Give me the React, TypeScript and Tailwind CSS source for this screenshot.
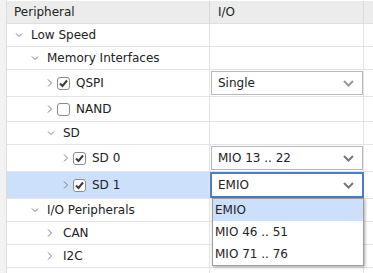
import React from "react";

type Row = {
  level: number;
  label: string;
  open?: boolean;
  check?: boolean;
  select?: string;
  focused?: boolean;
  selected?: boolean;
  height: string;
};

const rows: Row[] = [
  { level: 0, label: "Low Speed", open: true, height: "h-[23px]" },
  { level: 1, label: "Memory Interfaces", open: true, height: "h-[23px]" },
  { level: 2, label: "QSPI", check: true, select: "Single", height: "h-[27px]" },
  { level: 2, label: "NAND", check: false, height: "h-[25px]" },
  { level: 2, label: "SD", open: true, height: "h-[23px]" },
  { level: 3, label: "SD 0", check: true, select: "MIO 13 .. 22", height: "h-[27px]" },
  { level: 3, label: "SD 1", check: true, select: "EMIO", focused: true, selected: true, height: "h-[27px]" },
  { level: 1, label: "I/O Peripherals", open: true, height: "h-[23px]" },
  { level: 2, label: "CAN", height: "h-[23px]" },
  { level: 2, label: "I2C", height: "h-[23px]" },
  // next row is only a few pixels tall in view, its label falls below the edge
  { level: 2, label: "", check: false, height: "h-[23px]" },
];

const indent = ["pl-2", "pl-6", "pl-10", "pl-14"];

function Chevron({ open }: { open?: boolean }) {
  return (
    <svg width="8" height="8" viewBox="0 0 8 8" className="shrink-0">
      {open ? (
        <path d="M1 2.5L4 5.5L7 2.5" fill="none" stroke="#7a7a7a" strokeWidth="1" />
      ) : (
        <path d="M1 0.5L4.5 4L1 7.5" fill="none" stroke="#7a7a7a" strokeWidth="1" />
      )}
    </svg>
  );
}

function Checkbox({ on }: { on: boolean }) {
  return (
    <svg width="13" height="13" viewBox="0 0 13 13" className="ml-[2px] shrink-0">
      <rect x="0.5" y="0.5" width="12" height="12" rx="2.5" fill="#fff" stroke="#8c8c8c" />
      {on && <path d="M3 6.5L5.5 9L10 3.5" fill="none" stroke="#3a3a3a" strokeWidth="2" />}
    </svg>
  );
}

function Select({ value, focused }: { value: string; focused?: boolean }) {
  return (
    <div
      className={`ml-[1px] flex h-[24px] w-[152px] items-center justify-between border bg-white pl-[6px] pr-[8px] ${
        focused ? "border-[#4a7dd1] outline outline-[#4a7dd1]" : "border-[#b9b9b9]"
      }`}
    >
      <span>{value}</span>
      <svg width="11" height="7" viewBox="0 0 11 7">
        <path d="M1 1L5.5 5.5L10 1" fill="none" stroke={value === "Single" ? "#9a9a9a" : "#777"} strokeWidth="2" />
      </svg>
    </div>
  );
}

export default function App() {
  return (
    <div
      className="relative flex h-[273px] w-[373px] overflow-hidden bg-white text-[12px] text-[#222]"
      style={{ fontFamily: '"DejaVu Sans", sans-serif' }}
    >
      <div className="w-[7px] shrink-0 border-r border-[#dedede] bg-[#f2f2f2]" />
      <div className="flex flex-1 flex-col pt-[1px]">
        {/* header */}
        <div className="flex h-[23px] shrink-0 border-b border-[#e0e0e0] bg-[#ececec]">
          <div className="flex w-[203px] shrink-0 items-center border-r border-[#d9d9d9] pl-[7px]">Peripheral</div>
          <div className="flex w-[154px] shrink-0 items-center border-r border-[#dcdcdc] pl-[8px]">I/O</div>
          <div className="flex-1" />
        </div>

        {rows.map((r, i) => (
          <div key={i} className={`flex shrink-0 border-b border-[#e4e4e4] ${r.height}`}>
            <div
              className={`flex w-[203px] shrink-0 items-center border-r border-[#e4e4e4] ${indent[r.level]} ${
                r.selected ? "bg-[#cde0fb]" : ""
              }`}
            >
              <Chevron open={r.open} />
              {r.check !== undefined ? (
                <>
                  <Checkbox on={r.check} />
                  {r.label && <span className="ml-[6px]">{r.label}</span>}
                </>
              ) : (
                <span className="ml-[8px]">{r.label}</span>
              )}
            </div>
            <div className="flex w-[154px] shrink-0 items-center border-r border-[#e4e4e4]">
              {r.select && <Select value={r.select} focused={r.focused} />}
            </div>
            <div className="flex-1" />
          </div>
        ))}
      </div>

      {/* open dropdown list */}
      <div className="absolute left-[212px] top-[198px] flex w-[152px] flex-col border border-[#9e9e9e] bg-white shadow-[1px_1px_3px_rgba(0,0,0,0.35)]">
        <div className="flex h-[22px] items-center bg-[#cde0fb] pl-[2px]">EMIO</div>
        <div className="flex h-[22px] items-center pl-[2px]">MIO 46 .. 51</div>
        <div className="flex h-[22px] items-center pl-[2px]">MIO 71 .. 76</div>
      </div>
    </div>
  );
}
